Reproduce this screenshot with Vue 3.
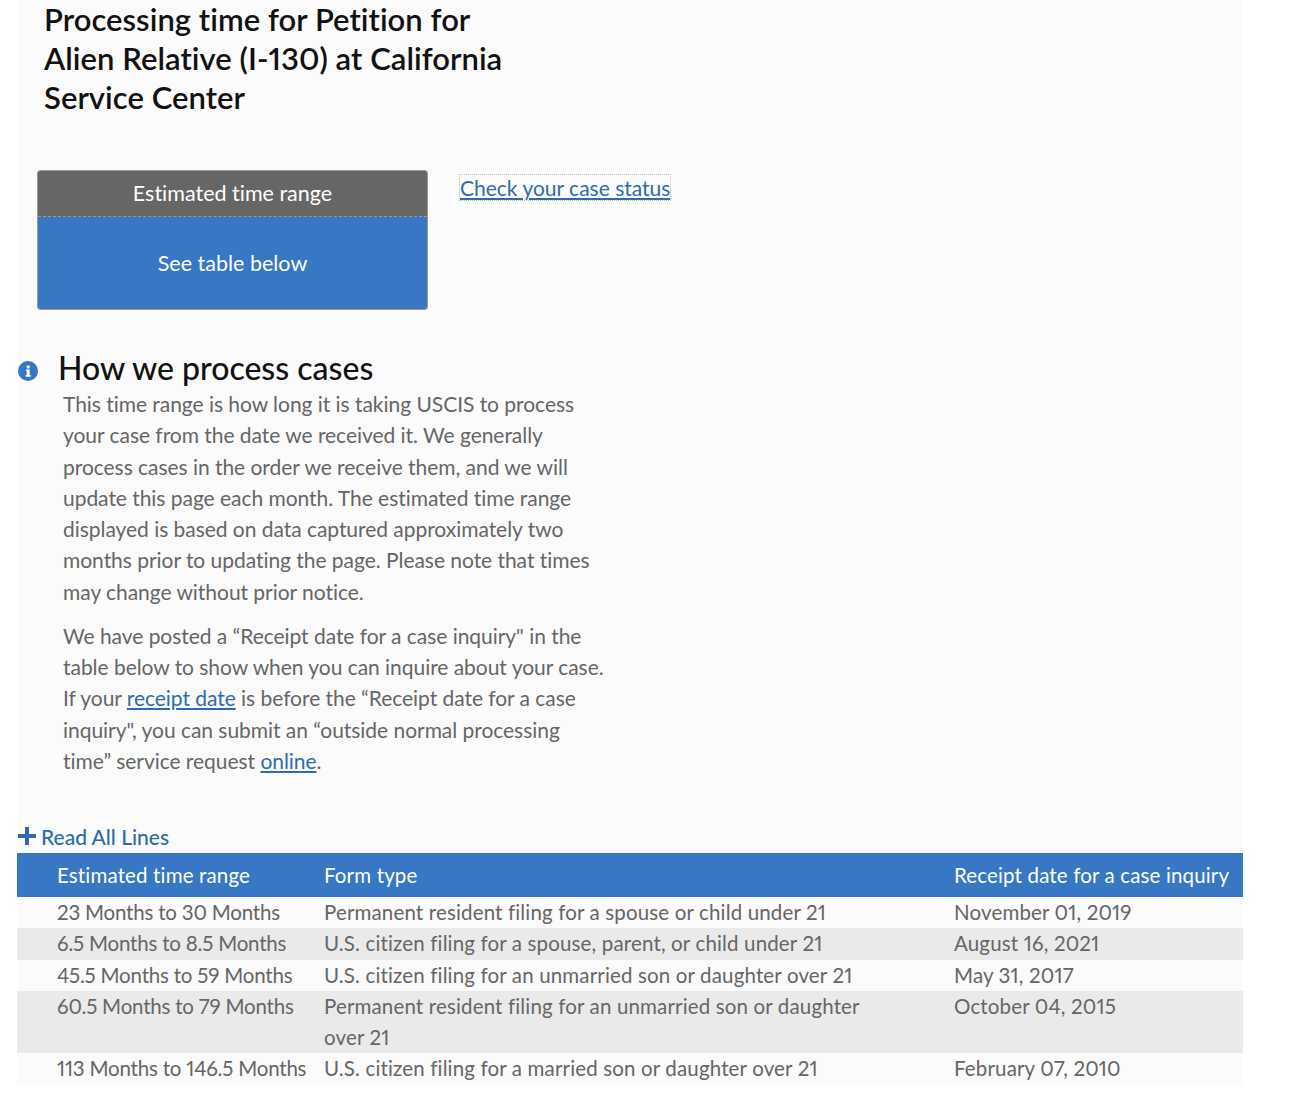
<template>
  <div class="page">
    <main class="panel">
      <h1 class="title">Processing time for Petition for<br>Alien Relative (I-130) at California<br>Service Center</h1>

      <div class="summary">
        <div class="box">
          <div class="box-head">Estimated time range</div>
          <div class="box-body">See table below</div>
        </div>
        <a class="status-link" href="#">Check your case status</a>
      </div>

      <section class="how">
        <h2 class="how-title">
          <svg class="info" viewBox="0 0 20 20" width="20" height="20">
            <circle cx="10" cy="10" r="10" fill="#3877c3" />
            <circle cx="10.2" cy="5.9" r="1.7" fill="#fff" />
            <path d="M7.9 8.5h3.8v5.6h1v1.6H7.7v-1.6h1V10.1h-.8z" fill="#fff" />
          </svg>
          How we process cases
        </h2>
        <p>This time range is how long it is taking USCIS to process<br>your case from the date we received it. We generally<br>process cases in the order we receive them, and we will<br>update this page each month. The estimated time range<br>displayed is based on data captured approximately two<br>months prior to updating the page. Please note that times<br>may change without prior notice.</p>
        <p>We have posted a “Receipt date for a case inquiry" in the<br>table below to show when you can inquire about your case.<br>If your <a href="#">receipt date</a> is before the “Receipt date for a case<br>inquiry", you can submit an “outside normal processing<br>time” service request <a href="#">online</a>.</p>
      </section>

      <a class="read-all" href="#">
        <svg viewBox="0 0 18 18" width="18" height="18"><path d="M7 0h4v7h7v4h-7v7H7v-7H0V7h7z" fill="#2f6ca8" /></svg>
        Read All Lines
      </a>

      <table class="times">
        <thead>
          <tr>
            <th class="c1">Estimated time range</th>
            <th class="c2">Form type</th>
            <th class="c3">Receipt date for a case inquiry</th>
          </tr>
        </thead>
        <tbody>
          <tr v-for="r in rows" :key="r.range">
            <td class="c1">{{ r.range }}</td>
            <td class="c2">{{ r.form }}</td>
            <td class="c3">{{ r.date }}</td>
          </tr>
        </tbody>
      </table>
    </main>
  </div>
</template>

<script setup>
const rows = [
  { range: '23 Months to 30 Months', form: 'Permanent resident filing for a spouse or child under 21', date: 'November 01, 2019' },
  { range: '6.5 Months to 8.5 Months', form: 'U.S. citizen filing for a spouse, parent, or child under 21', date: 'August 16, 2021' },
  { range: '45.5 Months to 59 Months', form: 'U.S. citizen filing for an unmarried son or daughter over 21', date: 'May 31, 2017' },
  { range: '60.5 Months to 79 Months', form: 'Permanent resident filing for an unmarried son or daughter over 21', date: 'October 04, 2015' },
  { range: '113 Months to 146.5 Months', form: 'U.S. citizen filing for a married son or daughter over 21', date: 'February 07, 2010' },
]
</script>

<style>
html, body { background: #fff; }
</style>

<style scoped>
.page {
  width: 1300px;
  height: 1098px;
  font-family: 'Lato', 'Open Sans', sans-serif;
  font-variant-ligatures: none;
  font-variant-numeric: proportional-nums;
  overflow: hidden;
}
.panel {
  margin-left: 17px;
  width: 1226px;
  height: 1085px;
  background: #fbfbfb;
  display: flow-root;
}
.title {
  margin: 0 0 0 27px;
  font-size: 31px;
  letter-spacing: 0.04px;
  line-height: 39px;
  font-weight: 600;
  color: #111;
}
.summary {
  display: flex;
  align-items: flex-start;
  gap: 32px;
  margin: 53px 0 0 20px;
}
.box {
  width: 391px;
  box-sizing: border-box;
  border: 1px solid #9a9a9a;
  border-radius: 3px;
  overflow: hidden;
  text-align: center;
  color: #fff;
  font-size: 21.5px;
}
.box-head {
  height: 46px;
  line-height: 44px;
  background: #666;
  border-bottom: 1px dashed #999;
  box-sizing: border-box;
}
.box-body {
  height: 92px;
  line-height: 92px;
  background: #3877c3;
}
.status-link {
  margin-top: 5px;
  font-size: 21px;
  line-height: 25px;
  color: #2f6ca8;
  outline: 1px dotted #bbb;
}
.how { margin-top: 38px; }
.how-title {
  display: flex;
  align-items: center;
  gap: 20px;
  margin: 0 0 1px 1px;
  font-size: 32px;
  line-height: 39px;
  font-weight: 500;
  color: #111;
}
.info { margin-top: 7px; }
.how p {
  margin: 0 0 12.6px 46px;
  font-size: 21px;
  letter-spacing: -0.04px;
  line-height: 31.3px;
  color: #666;
}
.how a { color: #2f6ca8; }
.read-all {
  display: flex;
  align-items: center;
  gap: 5px;
  margin: 47px 0 0 1px;
  height: 26px;
  font-size: 21px;
  font-weight: 500;
  color: #2f6ca8;
  text-decoration: none;
}
.times {
  width: 1226px;
  margin-top: 4px;
  border-collapse: collapse;
  table-layout: fixed;
  font-size: 20.5px;
  letter-spacing: 0.15px;
  line-height: 31.2px;
  color: #666;
}
.times th {
  height: 44px;
  padding: 0;
  background: #3877c3;
  color: #fff;
  font-weight: 400;
  text-align: left;
}
.times td {
  padding: 0;
  vertical-align: top;
}
.times td.c1 { letter-spacing: -0.2px; }
.times tbody tr:nth-child(even) { background: #eaeaea; }
.c1 { width: 307px; padding-left: 40px !important; box-sizing: border-box; }
.c2 { width: 630px; padding-right: 70px !important; box-sizing: border-box; }
</style>
